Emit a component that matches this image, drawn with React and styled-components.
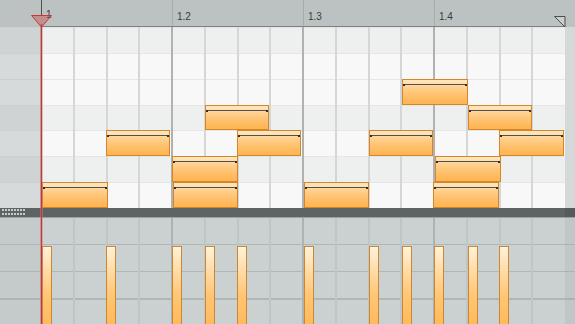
import React from "react";
import styled, { createGlobalStyle } from "styled-components";

const Global = createGlobalStyle`
  html, body { margin: 0; padding: 0; background: #cbd0d0; }
  #root { width: 575px; height: 324px; }
`;

const KEY_W = 41;
const GRID_W = 524;
const STRIP_W = 10;
const ROWS = [true, false, false, true, false, true, false]; // true = dark (black key)

const NOTES = [
  { x: 42, w: 65.5, r: 6 },
  { x: 106, w: 63.5, r: 4 },
  { x: 172, w: 66, r: 5 },
  { x: 172.5, w: 65.5, r: 6 },
  { x: 205, w: 64, r: 3 },
  { x: 236.5, w: 64.5, r: 4 },
  { x: 303.5, w: 65.5, r: 6 },
  { x: 368.5, w: 64.5, r: 4 },
  { x: 402, w: 66, r: 2 },
  { x: 468, w: 64, r: 3 },
  { x: 435, w: 65.5, r: 5 },
  { x: 433, w: 66, r: 6 },
  { x: 498.5, w: 65.5, r: 4 },
];

const VEL = [42, 106, 172, 205, 236.5, 303.5, 368.5, 402, 433.5, 468, 498.5];

const Frame = styled.div`
  position: relative;
  width: 575px;
  height: 324px;
  overflow: hidden;
  display: flex;
  flex-direction: column;
  font-family: "Liberation Sans", Arial, sans-serif;
  background: #cbd0d0;
`;

/* ---------- header / ruler ---------- */
const Header = styled.div`
  display: flex;
  height: 27px;
  flex: none;
  background: #bcc2c2;
`;
const HeaderSide = styled.div`
  width: ${(p) => p.$w}px;
  flex: none;
`;
const Ruler = styled.div`
  width: ${GRID_W}px;
  flex: none;
  display: grid;
  grid-template-columns: repeat(4, 131px);
  border-bottom: 1px solid #7c8282;
  box-sizing: border-box;
`;
const Beat = styled.div`
  position: relative;
  display: flex;
  align-items: flex-end;
  padding: 0 0 4px 4px;
  font-size: 10px;
  line-height: 10px;
  color: #383c3c;
  border-left: 1px solid ${(p) => (p.$first ? "transparent" : "#a7adad")};
  &::before {
    content: "";
    display: ${(p) => (p.$first ? "block" : "none")};
    position: absolute;
    left: -1px;
    top: 0;
    width: 1px;
    height: 15px;
    background: #4c5050;
  }
`;
const BeatLabel = styled.span`
  transform: translateY(${(p) => (p.$first ? "-2px" : "0")});
`;

/* ---------- note editor ---------- */
const NoteArea = styled.div`
  display: flex;
  height: 181px;
  flex: none;
`;
const KeyColumn = styled.div`
  width: ${KEY_W}px;
  flex: none;
  display: grid;
  grid-template-rows: repeat(7, 1fr);
`;
const KeyRow = styled.div`
  background: ${(p) => (p.$dark ? "#cfd3d3" : "#d7dada")};
  border-top: 1px solid #cbcfcf;
`;
const NoteGrid = styled.div`
  position: relative;
  width: ${GRID_W}px;
  flex: none;
  display: grid;
  & > .layer {
    grid-area: 1 / 1;
  }
`;
const RowsLayer = styled.div`
  display: grid;
  grid-template-rows: repeat(7, 1fr);
`;
const GridRow = styled.div`
  background: ${(p) => (p.$dark ? "#eeefef" : "#f8f8f8")};
  border-top: 1px solid #e6e6e6;
`;
const ColsLayer = styled.div`
  display: grid;
  grid-template-columns: repeat(16, 1fr);
`;
const Col = styled.div`
  border-left: 2px solid ${(p) => (p.$beat ? "#b0b2b2" : "#d5d6d6")};
  margin-left: -1px;
`;
const Note = styled.div`
  position: absolute;
  box-sizing: border-box;
  border: 1px solid #d5862a;
  background: linear-gradient(
    to bottom,
    #ffe6c0 0,
    #ffdfb0 4px,
    #ffd496 6px,
    #ffc475 55%,
    #ffb44f 100%
  );
  &::before {
    content: "";
    position: absolute;
    left: 0;
    right: 0;
    top: 4px;
    height: 2px;
    background: linear-gradient(to right, #2e2e2e 2px, transparent 2px, transparent calc(100% - 2px), #2e2e2e calc(100% - 2px)),
      linear-gradient(to bottom, #524e48 1px, transparent 1px);
  }
`;
const RightStrip = styled.div`
  width: ${STRIP_W}px;
  flex: none;
  background: #d5d8d8;
`;

/* ---------- splitter ---------- */
const Splitter = styled.div`
  display: flex;
  align-items: flex-start;
  height: 9px;
  flex: none;
  background: #5e6363;
  border-bottom: 1px solid #9ba1a1;
`;
const GripBox = styled.div`
  padding: 1px 0 0 2px;
  flex: 1;
  display: flex;
`;
const SplitterEnd = styled.div`
  width: ${STRIP_W}px;
  height: 9px;
  background: #555a5a;
`;

/* ---------- velocity lane ---------- */
const Lane = styled.div`
  flex: 1;
  display: flex;
  background-image: repeating-linear-gradient(
    to bottom,
    transparent 0,
    transparent 26px,
    #b1b6b6 26px,
    #b1b6b6 27.25px
  );
`;
const LaneKeys = styled.div`
  width: ${KEY_W}px;
  flex: none;
  background: rgba(160, 168, 168, 0.14);
`;
const LaneGrid = styled.div`
  position: relative;
  width: ${GRID_W}px;
  flex: none;
  display: grid;
  grid-template-columns: repeat(16, 1fr);
`;
const LaneCol = styled.div`
  border-left: 2px solid ${(p) => (p.$beat ? "#adb2b2" : "#c0c5c5")};
  margin-left: -1px;
`;
const LaneStrip = styled.div`
  width: ${STRIP_W}px;
  flex: none;
  background: rgba(150, 158, 158, 0.18);
`;
const VelBar = styled.div`
  position: absolute;
  top: 28px;
  bottom: -4px;
  width: 10px;
  box-sizing: border-box;
  border: 1px solid #cd8632;
  background: linear-gradient(to bottom, #fff2dc 0, #ffdfae 25%, #ffc676 60%, #ffb85a 100%);
`;

/* ---------- overlays ---------- */
const Playhead = styled.div`
  position: absolute;
  left: 41px;
  top: 24px;
  bottom: 0;
  width: 1px;
  background: #c23838;
  box-shadow: 1px 0 0 rgba(215, 120, 120, 0.45), -1px 0 0 rgba(215, 120, 120, 0.45);
`;
const Marker = styled.svg`
  position: absolute;
  left: ${(p) => p.$x}px;
  top: ${(p) => p.$y}px;
`;

export default function App() {
  return (
    <>
      <Global />
      <Frame>
        <Header>
          <HeaderSide $w={KEY_W} />
          <Ruler>
            {["1", "1.2", "1.3", "1.4"].map((t, i) => (
              <Beat key={t} $first={i === 0}>
                <BeatLabel $first={i === 0}>{t}</BeatLabel>
              </Beat>
            ))}
          </Ruler>
          <HeaderSide $w={STRIP_W} />
        </Header>

        <NoteArea>
          <KeyColumn>
            {ROWS.map((d, i) => (
              <KeyRow key={i} $dark={d} />
            ))}
          </KeyColumn>
          <NoteGrid>
            <RowsLayer className="layer">
              {ROWS.map((d, i) => (
                <GridRow key={i} $dark={d} />
              ))}
            </RowsLayer>
            <ColsLayer className="layer">
              {Array.from({ length: 16 }, (_, i) => (
                <Col key={i} $beat={i % 4 === 0} />
              ))}
            </ColsLayer>
            {NOTES.map((n, i) => (
              <Note
                key={i}
                style={{
                  left: n.x - KEY_W,
                  width: n.w,
                  top: `${(n.r * 100) / 7}%`,
                  height: `${100 / 7}%`,
                }}
              />
            ))}
          </NoteGrid>
          <RightStrip />
        </NoteArea>

        <Splitter>
          <GripBox>
            <svg width="24" height="6" viewBox="0 0 24 6">
              {Array.from({ length: 16 }, (_, i) => (
                <rect
                  key={i}
                  x={(i % 8) * 3}
                  y={i < 8 ? 0 : 4}
                  width="2"
                  height="2"
                  fill="#c6caca"
                />
              ))}
            </svg>
          </GripBox>
          <SplitterEnd />
        </Splitter>

        <Lane>
          <LaneKeys />
          <LaneGrid>
            {Array.from({ length: 16 }, (_, i) => (
              <LaneCol key={i} $beat={i % 4 === 0} />
            ))}
            {VEL.map((x, i) => (
              <VelBar key={i} style={{ left: x - KEY_W }} />
            ))}
          </LaneGrid>
          <LaneStrip />
        </Lane>

        <Playhead />
        <Marker $x={31} $y={15} width="21" height="13" viewBox="0 0 21 13">
          <polygon
            points="0.5,0.5 20.5,0.5 10.5,12"
            fill="rgba(205,80,80,0.45)"
            stroke="#c23a3a"
            strokeWidth="1"
          />
        </Marker>
        <Marker $x={554} $y={16} width="12" height="12" viewBox="0 0 12 12">
          <polygon
            points="0.5,0.5 11,0.5 11,11"
            fill="#c9cece"
            stroke="#4a4e4e"
            strokeWidth="1"
          />
        </Marker>
      </Frame>
    </>
  );
}
